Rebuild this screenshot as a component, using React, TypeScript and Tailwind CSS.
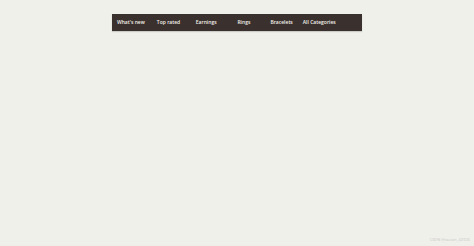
const ITEMS = ["What's new", "Top rated", "Earnings", "Rings", "Bracelets", "All Categories"];

export default function App() {
  return (
    <div className="relative w-[474px] h-[246px] bg-[#f0f0eb] font-['Open_Sans',sans-serif]">
      <div className="pt-[14px] pl-[112px]">
        <nav className="flex w-[250px] h-[17px] bg-[#3a302d] shadow-[0_1px_1px_rgba(0,0,0,0.15)]">
          {ITEMS.map((item) => (
            <a
              key={item}
              className="w-[37.7px] flex items-center justify-center whitespace-nowrap text-[5px] font-semibold text-[#f4f0ec]"
            >
              {item}
            </a>
          ))}
        </nav>
      </div>
      <span className="absolute right-[4px] bottom-[3px] text-[4px] text-[#c8c8c8]">CSDN @weixin_43926</span>
    </div>
  );
}
